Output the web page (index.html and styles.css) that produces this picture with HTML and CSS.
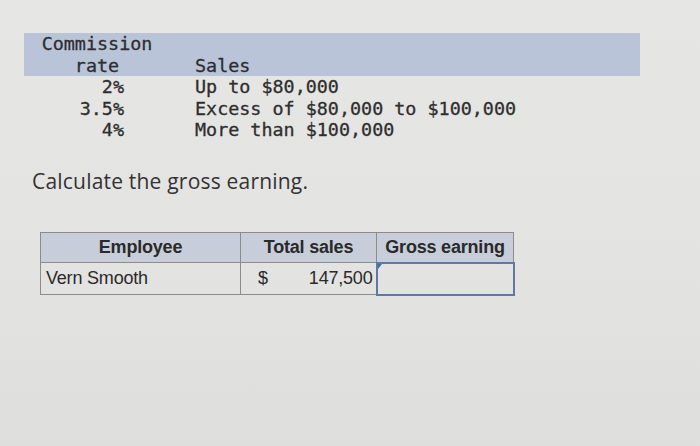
FILE: index.html
```html
<!DOCTYPE html>
<html>
<head>
<meta charset="utf-8">
<link rel="stylesheet" href="styles.css">
</head>
<body>
<div class="page">
  <div class="rates">
    <div class="band"></div>
    <div class="rates-grid">
      <div class="c1 head">Commission</div><div class="c2"></div>
      <div class="c1 head">rate</div><div class="c2">Sales</div>
      <div class="c1 val">2%</div><div class="c2">Up to $80,000</div>
      <div class="c1 val">3.5%</div><div class="c2">Excess of $80,000 to $100,000</div>
      <div class="c1 val">4%</div><div class="c2">More than $100,000</div>
    </div>
  </div>
  <p class="prompt">Calculate the gross earning.</p>
  <table class="calc">
    <thead>
      <tr><th class="col-emp">Employee</th><th class="col-sales">Total sales</th><th class="col-gross">Gross earning</th></tr>
    </thead>
    <tbody>
      <tr>
        <td class="emp">Vern Smooth</td>
        <td class="sales"><span class="dollar">$</span><span class="amt">147,500</span></td>
        <td class="gross"><span class="marker"></span></td>
      </tr>
    </tbody>
  </table>
</div>
</body>
</html>
```

FILE: styles.css
```css
html, body {
  margin: 0;
  padding: 0;
}
body {
  width: 700px;
  height: 446px;
  background: linear-gradient(180deg, #e6e6e4 0%, #e3e3e1 60%, #dededc 100%);
  overflow: hidden;
}
.page {
  padding: 33px 0 0 24px;
}
.rates {
  position: relative;
  width: 616px;
}
.band {
  position: absolute;
  left: 0;
  top: 0;
  width: 616px;
  height: 43px;
  background: #b9c4d8;
}
.rates-grid {
  position: relative;
  display: grid;
  grid-template-columns: 114px auto;
  column-gap: 41px;
  padding-left: 16px;
  font-family: "DejaVu Sans Mono", monospace;
  font-size: 18.4px;
  line-height: 21.5px;
  color: #2e2e2e;
  -webkit-text-stroke: 0.3px #2e2e2e;
}
.c1.head {
  text-align: center;
  white-space: nowrap;
}
.c1.val {
  text-align: right;
  padding-right: 30px;
}
.c2 {
  white-space: pre;
}
.prompt {
  margin: 26px 0 0 8px;
  font-family: "Open Sans", "Liberation Sans", sans-serif;
  font-size: 21px;
  color: #333;
  letter-spacing: 0.2px;
}
.calc {
  margin: 37px 0 0 16px;
  border-collapse: collapse;
  font-family: "Liberation Sans", Arial, sans-serif;
  font-size: 18px;
  color: #2a2a2a;
  letter-spacing: -0.2px;
}
.calc th, .calc td {
  border: 1.5px solid #8c8c8c;
  padding: 0;
}
.calc th {
  background: #c8ced9;
  height: 29px;
  font-weight: bold;
  text-align: center;
}
.calc td {
  height: 30px;
}
.col-emp { width: 199px; }
.col-sales { width: 135px; }
.col-gross { width: 136px; }
.calc td.emp {
  padding-left: 5px;
}
.calc td.sales {
  padding: 0 3px 0 17px;
}
.dollar {
  float: left;
}
.amt {
  float: right;
}
.calc td.gross {
  position: relative;
  border: 2px solid #5e79a3;
}
.marker {
  position: absolute;
  left: 0;
  top: 0;
  width: 0;
  height: 0;
  border-top: 5px solid #3f6fb3;
  border-right: 4px solid transparent;
}
```
